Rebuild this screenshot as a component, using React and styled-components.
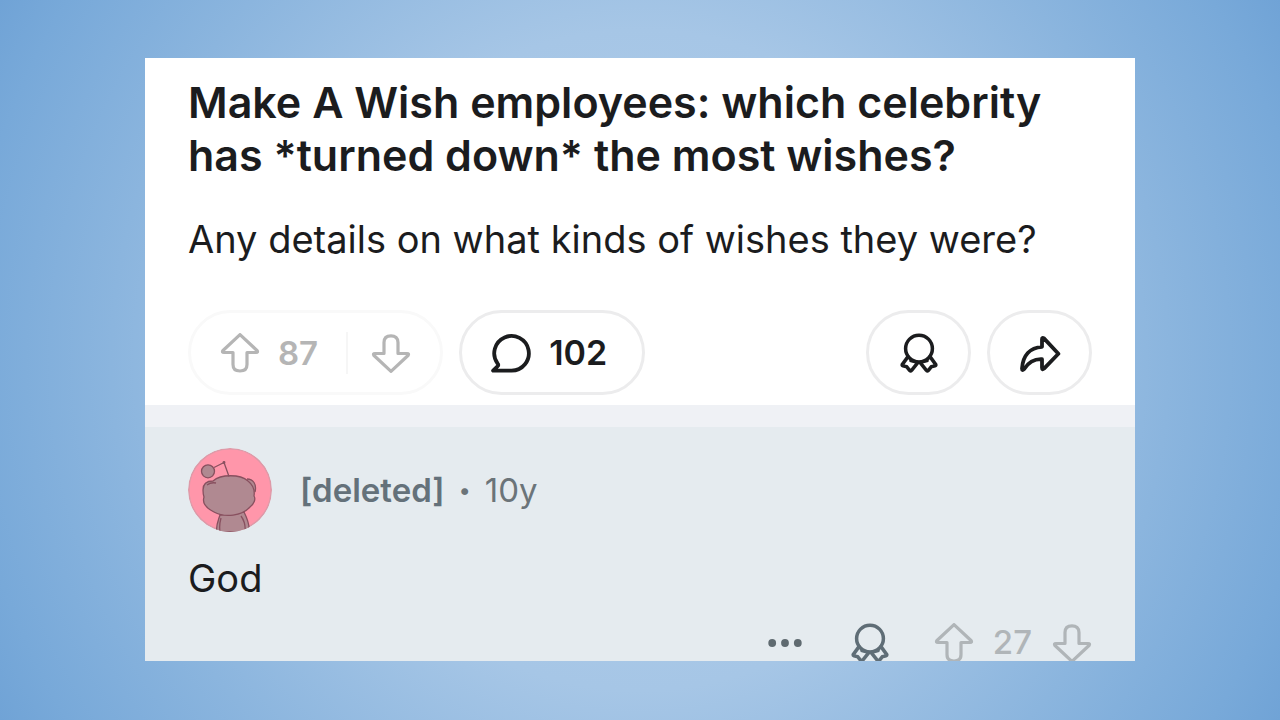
import React, { useState } from "react";

import styled, { createGlobalStyle } from "styled-components"

const App = () => {
    const [post] = useState({
        title: "Make A Wish employees: which celebrity has *turned down* the most wishes?",
        content: "Any details on what kinds of wishes they were?",
        votes: 87,
        comments: 102,
    });
    const [comment] = useState({ author: "[deleted]", age: "10y", content: "God", votes: 27 });

    return (<>
        <GlobalStyle />
        <Page>
            <Card>
                <Post>
                    <Title>{post.title}</Title>
                    <Content>{post.content}</Content>
                    <PostActions>
                        <VotePill>
                            <IconButton aria-label="Upvote"><UpIcon /></IconButton>
                            <VoteCount>{post.votes}</VoteCount>
                            <Divider />
                            <IconButton aria-label="Downvote"><DownIcon /></IconButton>
                        </VotePill>
                        <CommentPill><CommentIcon />{post.comments}</CommentPill>
                        <Spacer />
                        <RoundPill aria-label="Award"><AwardIcon /></RoundPill>
                        <RoundPill aria-label="Share"><ShareIcon /></RoundPill>
                    </PostActions>
                </Post>

                <Comment>
                    <CommentHead>
                        <Avatar />
                        <Author href="#">{comment.author}</Author>
                        <Dot>•</Dot>
                        <Age>{comment.age}</Age>
                    </CommentHead>
                    <CommentText>{comment.content}</CommentText>
                    <CommentActions>
                        <MoreButton aria-label="More"><MoreIcon /></MoreButton>
                        <AwardButton aria-label="Award"><AwardIcon /></AwardButton>
                        <IconButton aria-label="Upvote"><UpIcon /></IconButton>
                        <CommentVotes>{comment.votes}</CommentVotes>
                        <IconButton aria-label="Downvote"><DownIcon /></IconButton>
                    </CommentActions>
                </Comment>
            </Card>
        </Page>
    </>)
}

export default App;


// icons
const UpIcon = () => (
    <Icon width="40" height="40" viewBox="0 0 40 40" $weight="3.2">
        <path d="M20 1.6L37 17.500Q38.400 19.500 36 19.500H27V31.500C27 36 24.200 38 20 38S13 36 13 31.500V19.500H4Q1.600 19.500 3 17.500Z" />
    </Icon>
)

const DownIcon = () => (
    <Icon width="40" height="40" viewBox="0 0 40 40" $weight="3.2">
        <path d="M20 38.400L37 22.500Q38.400 20.500 36 20.500H27V9.500C27 5 24.200 2.800 20 2.800S13 5 13 9.500V20.500H4Q1.600 20.500 3 22.500Z" />
    </Icon>
)

const CommentIcon = () => (
    <Icon width="40" height="40" viewBox="0 0 40 40" $weight="3.8">
        <path d="M20.500 37.600A17.300 17.300 0 1 0 6.500 30.400Q8.100 32 6.500 33.400L2.100 37.600Z" />
    </Icon>
)

const AwardIcon = () => (
    <Icon width="40" height="40" viewBox="0 0 40 40" $weight="3.5">
        <circle cx="20" cy="15.600" r="13.400" />
        <path d="M9 23.600L3.200 31.600Q3 32.600 4 32.900L7.800 33.800L10.800 37.600Q11.800 38.600 12.600 37.400L19 29.400L12 27.600" />
        <path d="M31 23.600L36.800 31.600Q37 32.600 36 32.900L32.200 33.800L29.200 37.600Q28.200 38.600 27.400 37.400L21 29.400L28 27.600" />
    </Icon>
)

const ShareIcon = () => (
    <Icon width="42" height="40" viewBox="0 0 42 40" $weight="3.8">
        <path d="M23 6.200Q23 4 25 5.400L39.400 20.700L25 35.600Q23 37.200 23 34.800V26.200C15 25.800 9.800 28.800 5 36.200Q3 38.200 3 35.600C3.800 22.400 11 14.600 23 13.800Z" />
    </Icon>
)

const MoreIcon = () => (
    <svg width="34" height="40" viewBox="0 0 34 40" fill="currentColor">
        <circle cx="4.2" cy="20" r="3.9" />
        <circle cx="17" cy="20" r="3.9" />
        <circle cx="29.8" cy="20" r="3.9" />
    </svg>
)

const Avatar = () => (
    <AvatarSvg width="84" height="84" viewBox="0 0 84 84">
        <clipPath id="avatarClip"><circle cx="42" cy="42" r="42" /></clipPath>
        <g clipPath="url(#avatarClip)">
            <circle cx="42" cy="42" r="41.2" fill="#ff96aa" stroke="#de9aa8" strokeWidth="1.6" />
            <g fill="#b08991" stroke="#88505f" strokeWidth="1.3" strokeLinejoin="round">
                <path d="M32 67C30 73 28 77 28.500 84H61C62 77 59 70 56 64Z" />
                <path d="M33 70Q31 77 32 84M53 68Q58 75 57 84" fill="none" />
                <path d="M59 31C65 31 69 36 67 44" />
                <path d="M15 42C15 35 19 33 25 33C33 26 52 26 60 33C65 37 67 42 66 48C68 51 66 56 62 59C54 68 37 70 26 64C18 60 14 55 16 49Q15 46 15 42Z" />
                <path d="M19 37Q23 34 28 35" fill="none" />
                <circle cx="20" cy="23.300" r="6.500" />
                <path d="M26 19.500L36 14.500L41 28.500" fill="none" />
                <circle cx="36" cy="14.500" r="0.800" />
            </g>
        </g>
    </AvatarSvg>
)


// styles
const GlobalStyle = createGlobalStyle`
    * { box-sizing: border-box; }
    body {
        margin: 0;
        font-family: Inter, "Liberation Sans", sans-serif;
    }
    h1, p { margin: 0; }
    button {
        font: inherit;
        color: inherit;
        padding: 0;
        border: none;
        background: none;
        cursor: pointer;
    }
`

const Icon = styled.svg`
    display: block;
    flex: none;
    fill: none;
    stroke: currentColor;
    stroke-width: ${props => props.$weight || 3};
    stroke-linejoin: round;
    stroke-linecap: round;
`

const AvatarSvg = styled.svg`
    display: block;
    flex: none;
    margin-right: 28px;
`

const Page = styled.main`
    min-height: 100vh;
    padding: 58px 24px;
    background: radial-gradient(circle, #b3cfea 0%, #a6c6e6 45%, #8bb5de 72%, #78a9d9 92%, #70a3d6 100%);
`

const Card = styled.article`
    max-width: 990px;
    margin: 0 auto;
    background: white;
`

const Post = styled.section`
    padding: 18px 43px 10px;
    border-bottom: 22px solid #eff1f5;
`

const Title = styled.h1`
    font-size: 43px;
    line-height: 53px;
    font-weight: 600;
    color: #1b1c1e;
`

const Content = styled.p`
    margin-top: 33px;
    font-size: 38px;
    line-height: 48px;
    color: #1b1c1e;
`

const PostActions = styled.div`
    display: flex;
    gap: 16px;
    margin-top: 47px;
    font-size: 33px;
    font-weight: 600;
    color: #1b1c1e;
`

const Pill = styled.div`
    display: flex;
    align-items: center;
    height: 85px;
    border: 3px solid #ececed;
    border-radius: 43px;
`

const VotePill = styled(Pill)`
    padding: 0 29px;
    border-color: #f9f9f9;
    color: #b5b5b5;
`

const CommentPill = styled(Pill).attrs({ as: "button" })`
    && {
        gap: 18px;
        padding: 0 35px 0 29px;
        border: 3px solid #ececed;
        font-size: 34px;
    }
`

const RoundPill = styled(Pill).attrs({ as: "button" })`
    && {
        justify-content: center;
        width: 105px;
        border: 3px solid #ececed;
    }
`

const Spacer = styled.div`
    flex: 1;
`

const IconButton = styled.button`
    display: block;
`

const VoteCount = styled.span`
    margin-left: 18px;
`

const Divider = styled.span`
    width: 2px;
    height: 42px;
    margin: 0 23px 0 28px;
    background: #f6f6f6;
`

const Comment = styled.section`
    padding: 21px 43px 0;
    background: #e5ebef;
`

const CommentHead = styled.div`
    display: flex;
    align-items: center;
    font-size: 33px;
    color: #6b7479;
`

const Author = styled.a`
    font-weight: 600;
    color: #64717a;
    text-decoration: none;
`

const Dot = styled.span`
    margin: 0 14px;
    font-size: 22px;
`

const Age = styled.span``

const CommentText = styled.p`
    margin-top: 22px;
    font-size: 38px;
    line-height: 48px;
    color: #1b1c1e;
`

const CommentActions = styled.div`
    display: flex;
    justify-content: flex-end;
    height: 38px;
    margin-top: 21px;
    overflow: hidden;
    font-size: 33px;
    color: #b0b5b8;
`

const MoreButton = styled(IconButton)`
    && {
        margin-right: 48px;
        color: #5f6a70;
    }
`

const AwardButton = styled(IconButton)`
    && {
        margin-right: 44px;
        color: #5f6d76;
    }
`

const CommentVotes = styled.span`
    margin: 0 20px 0 19px;
    line-height: 38px;
    font-weight: 500;
`
